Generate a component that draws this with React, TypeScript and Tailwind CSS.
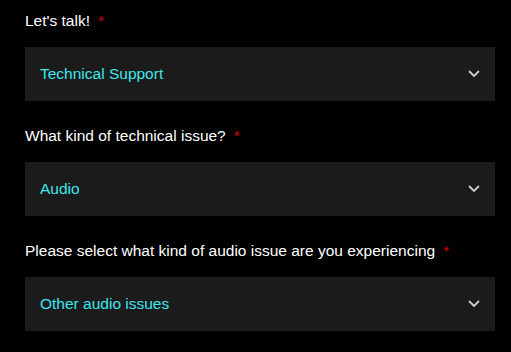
import React from "react";

function Field({ label, value }: { label: string; value: string }) {
  return (
    <div className="flex flex-col">
      <div className="text-[15.5px] leading-[20px] text-white">
        {label}
        <span className="ml-[8px] text-[#d10000]">*</span>
      </div>
      <div className="mt-[16px] flex h-[54px] items-center justify-between bg-[#1b1b1b] pl-[15px] pr-[15px]">
        <span className="text-[15.5px] text-[#3ee6ee]">{value}</span>
        <svg width="12" height="8" viewBox="0 0 12 8" fill="none">
          <path d="M1.5 1.5 L6 6 L10.5 1.5" stroke="#cfcfcf" strokeWidth="1.8" strokeLinecap="round" />
        </svg>
      </div>
    </div>
  );
}

export default function App() {
  return (
    <div
      className="h-[352px] w-[511px] bg-black pl-[25px] pr-[16px] pt-[11px]"
      style={{ fontFamily: '"Liberation Sans", Arial, sans-serif' }}
    >
      <div className="flex flex-col gap-[25px]">
        <Field label="Let's talk!" value="Technical Support" />
        <Field label="What kind of technical issue?" value="Audio" />
        <Field label="Please select what kind of audio issue are you experiencing" value="Other audio issues" />
      </div>
    </div>
  );
}
